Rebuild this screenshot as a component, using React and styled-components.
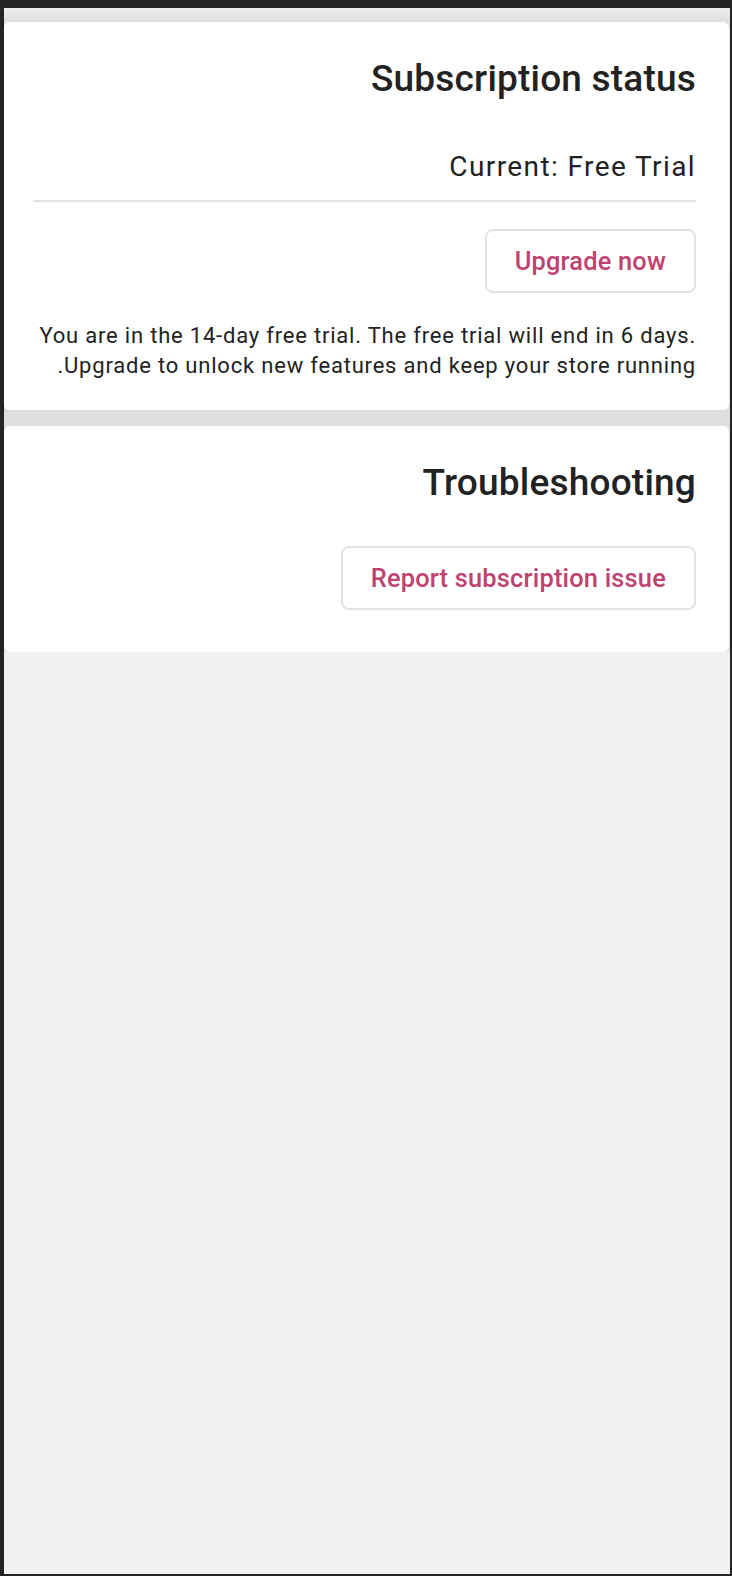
import styled, { createGlobalStyle } from 'styled-components';

const GlobalStyle = createGlobalStyle`
  html, body {
    margin: 0;
    padding: 0;
    background: #242424;
  }
  body {
    font-family: Roboto, "Noto Sans", sans-serif;
    color: #212121;
  }
  #root {
    padding: 8px 2px 2px 4px;
  }
`;

const Screen = styled.div`
  height: 1566px;
  background: #f1f1f1;
  direction: rtl;
  display: flex;
  flex-direction: column;
`;

const CardList = styled.div`
  display: flex;
  flex-direction: column;
  gap: 16px;
  padding-top: 14px;
  padding-right: 1px;
  background: linear-gradient(#ececec 0, #e0e0e0 14px, #dedede 100%);
`;

const Card = styled.section`
  background: #fff;
  border-radius: 6px;
  padding: ${({ $bottom }) => `35px 33px ${$bottom}px 29px`};
  display: flex;
  flex-direction: column;
  align-items: flex-start;
`;

const Title = styled.h2`
  margin: 0;
  font-size: 37px;
  line-height: 44px;
  font-weight: 500;
  letter-spacing: 0.2px;
  color: #222;
`;

const Current = styled.div`
  margin-top: 48px;
  font-size: 28px;
  line-height: 36px;
  letter-spacing: 1.4px;
  color: #222;
`;

const Divider = styled.hr`
  align-self: stretch;
  margin: 15px 0 0;
  border: 0;
  height: 2px;
  background: #e2e2e2;
`;

const OutlineButton = styled.button`
  box-sizing: border-box;
  margin-top: ${({ $top }) => $top}px;
  height: 64px;
  padding: 0 28px;
  background: #fff;
  border: 2px solid #e2e2e2;
  border-radius: 8px;
  font-family: Roboto, "Noto Sans", sans-serif;
  font-size: 25.4px;
  font-weight: 500;
  letter-spacing: 0.2px;
  color: #c0426f;
  cursor: pointer;
`;

const Note = styled.p`
  margin: 28px 0 0;
  font-size: 22px;
  line-height: 29.5px;
  letter-spacing: 0.8px;
  color: #222;
`;

const App = () => {
  return (
    <>
      <GlobalStyle />
      <Screen>
        <CardList>
          <Card $bottom={30}>
            <Title>Subscription status</Title>
            <Current>Current: Free Trial</Current>
            <Divider />
            <OutlineButton $top={27}>Upgrade now</OutlineButton>
            <Note>
              You are in the 14-day free trial. The free trial will end in 6
              days. Upgrade to unlock new features and keep your store running.
            </Note>
          </Card>
          <Card $bottom={42}>
            <Title>Troubleshooting</Title>
            <OutlineButton $top={41}>Report subscription issue</OutlineButton>
          </Card>
        </CardList>
      </Screen>
    </>
  );
};

export default App;
